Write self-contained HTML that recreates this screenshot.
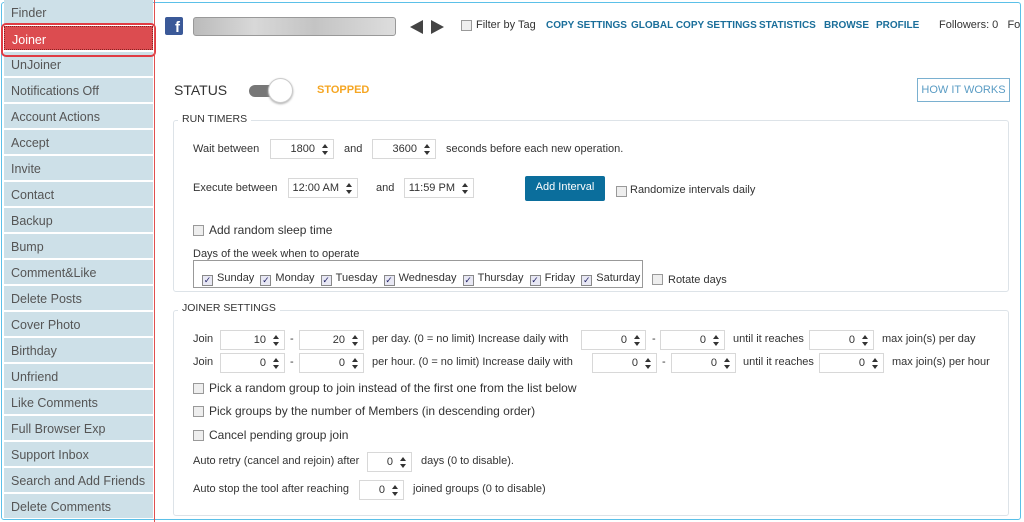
<!DOCTYPE html>
<html><head><style>
*{box-sizing:border-box;margin:0;padding:0}
body{width:1024px;height:522px;background:#fff;font-family:"Liberation Sans",sans-serif;font-size:11px;color:#333;position:relative;overflow:hidden}
.a{position:absolute;white-space:nowrap}
.frame{position:absolute;left:1px;top:2px;width:1020px;height:518px;border:1px solid #5bc0e8;border-radius:3px}
.side{position:absolute;left:4px;top:0;width:150px;height:520px}
.it{position:absolute;left:0;width:149px;height:24px;background:#cde0e8;color:#555;font-size:12.5px;padding:6px 0 0 7px}
.red{position:absolute;left:154px;top:0;width:1px;height:522px;background:#e05050}
.spin{position:absolute;height:20px;border:1px solid #d8d8d8;background:#fff;text-align:right;padding:3px 18px 0 0;font-size:11px;color:#333}
.spin:after{content:"";position:absolute;right:5px;top:4px;width:0;height:0;border-left:3px solid transparent;border-right:3px solid transparent;border-bottom:4px solid #333}
.spin:before{content:"";position:absolute;right:5px;top:11px;width:0;height:0;border-left:3px solid transparent;border-right:3px solid transparent;border-top:4px solid #333}
.cb{position:absolute;width:11px;height:11px;border:1px solid #999;background:#eee}
.cc{display:inline-block;width:11px;height:11px;border:1px solid #888;background:#e8e8f4;vertical-align:-2px;margin-right:4px;position:relative;color:#226;font-size:9px;line-height:9px;text-align:center}
.lk{color:#1a6e9a;font-weight:bold;font-size:10px}
.grp{position:absolute;border:1px solid #dde3e8;border-radius:3px}
.leg{position:absolute;background:#fff;padding:0 4px;font-size:10.5px;color:#333}
</style></head><body>
<div class="frame"></div>
<div class="side">
<div class="it" style="top:0">Finder</div>
<div class="it" style="top:26px;background:#dc4c50;color:#fff;border:1px dotted #822">Joiner</div>
<div class="it" style="top:52px">UnJoiner</div>
<div class="it" style="top:78px">Notifications Off</div>
<div class="it" style="top:104px">Account Actions</div>
<div class="it" style="top:130px">Accept</div>
<div class="it" style="top:156px">Invite</div>
<div class="it" style="top:182px">Contact</div>
<div class="it" style="top:208px">Backup</div>
<div class="it" style="top:234px">Bump</div>
<div class="it" style="top:260px">Comment&amp;Like</div>
<div class="it" style="top:286px">Delete Posts</div>
<div class="it" style="top:312px">Cover Photo</div>
<div class="it" style="top:338px">Birthday</div>
<div class="it" style="top:364px">Unfriend</div>
<div class="it" style="top:390px">Like Comments</div>
<div class="it" style="top:416px">Full Browser Exp</div>
<div class="it" style="top:442px">Support Inbox</div>
<div class="it" style="top:468px">Search and Add Friends</div>
<div class="it" style="top:494px">Delete Comments</div>
</div>
<div class="a" style="left:1px;top:23px;width:155px;height:34px;border:2px solid #e03c44;border-radius:5px"></div>
<div class="red"></div>

<div class="a" style="left:165px;top:17px;width:18px;height:18px;background:#3b5998;border-radius:2px;color:#fff;font-weight:bold;font-size:15px;text-align:right;padding:2px 3px 0 0;line-height:18px">f</div>
<div class="a" style="left:193px;top:17px;width:203px;height:19px;background:linear-gradient(90deg,#bbb,#d8d8d8 30%,#c4c4c4 60%,#ddd);border:1px solid #999;border-radius:3px"></div>
<div class="a" style="left:410px;top:20px;width:0;height:0;border-top:7px solid transparent;border-bottom:7px solid transparent;border-right:13px solid #444"></div>
<div class="a" style="left:431px;top:20px;width:0;height:0;border-top:7px solid transparent;border-bottom:7px solid transparent;border-left:13px solid #444"></div>
<div class="cb" style="left:461px;top:20px"></div>
<div class="a" style="left:476px;top:19px;font-size:11px">Filter by Tag</div>
<div class="a lk" style="left:546px;top:20px">COPY SETTINGS</div>
<div class="a lk" style="left:631px;top:20px">GLOBAL COPY SETTINGS</div>
<div class="a lk" style="left:759px;top:20px">STATISTICS</div>
<div class="a lk" style="left:824px;top:20px">BROWSE</div>
<div class="a lk" style="left:876px;top:20px">PROFILE</div>
<div class="a" style="left:939px;top:19px">Followers: 0 &nbsp;&nbsp;Fo</div>

<div class="a" style="left:174px;top:82px;font-size:14px;color:#333">STATUS</div>
<div class="a" style="left:249px;top:85px;width:40px;height:12px;background:#777;border-radius:6px"></div>
<div class="a" style="left:268px;top:78px;width:25px;height:25px;background:#fff;border:1px solid #ccc;border-radius:50%;box-shadow:0 1px 2px #aaa"></div>
<div class="a" style="left:317px;top:84px;color:#f5a623;font-weight:bold;font-size:11px">STOPPED</div>
<div class="a" style="left:917px;top:78px;width:93px;height:24px;border:1px solid #7ab0d0;color:#5a9cc4;font-size:11px;text-align:center;padding-top:5px">HOW IT WORKS</div>

<div class="grp" style="left:173px;top:120px;width:836px;height:172px"></div>
<div class="leg" style="left:178px;top:113px">RUN TIMERS</div>
<div class="a" style="left:193px;top:143px">Wait between</div>
<div class="spin" style="left:270px;top:139px;width:64px">1800</div>
<div class="a" style="left:344px;top:143px">and</div>
<div class="spin" style="left:372px;top:139px;width:64px">3600</div>
<div class="a" style="left:446px;top:143px">seconds before each new operation.</div>
<div class="a" style="left:193px;top:182px">Execute between</div>
<div class="spin" style="left:288px;top:178px;width:70px">12:00 AM</div>
<div class="a" style="left:376px;top:182px">and</div>
<div class="spin" style="left:404px;top:178px;width:70px">11:59 PM</div>
<div class="a" style="left:525px;top:176px;width:80px;height:25px;background:#0b6e9c;border-radius:2px;color:#fff;text-align:center;padding-top:5px">Add Interval</div>
<div class="cb" style="left:616px;top:186px"></div>
<div class="a" style="left:630px;top:184px">Randomize intervals daily</div>
<div class="cb" style="left:193px;top:225px"></div>
<div class="a" style="left:209px;top:223px;font-size:12px">Add random sleep time</div>
<div class="a" style="left:193px;top:248px">Days of the week when to operate</div>
<div class="a" style="left:193px;top:260px;width:450px;height:28px;border:1px solid #999;padding:11px 0 0 8px;font-size:11px">
<span class="cc">✓</span>Sunday &nbsp;<span class="cc">✓</span>Monday &nbsp;<span class="cc">✓</span>Tuesday &nbsp;<span class="cc">✓</span>Wednesday &nbsp;<span class="cc">✓</span>Thursday &nbsp;<span class="cc">✓</span>Friday &nbsp;<span class="cc">✓</span>Saturday</div>
<div class="cb" style="left:652px;top:274px"></div>
<div class="a" style="left:668px;top:274px">Rotate days</div>

<div class="grp" style="left:173px;top:310px;width:836px;height:206px"></div>
<div class="leg" style="left:178px;top:302px">JOINER SETTINGS</div>
<div class="a" style="left:193px;top:333px">Join</div>
<div class="spin" style="left:220px;top:330px;width:65px">10</div>
<div class="a" style="left:290px;top:333px">-</div>
<div class="spin" style="left:299px;top:330px;width:65px">20</div>
<div class="a" style="left:372px;top:333px">per day. (0 = no limit) Increase daily with</div>
<div class="spin" style="left:581px;top:330px;width:65px">0</div>
<div class="a" style="left:652px;top:333px">-</div>
<div class="spin" style="left:660px;top:330px;width:65px">0</div>
<div class="a" style="left:733px;top:333px">until it reaches</div>
<div class="spin" style="left:809px;top:330px;width:65px">0</div>
<div class="a" style="left:882px;top:333px">max join(s) per day</div>
<div class="a" style="left:193px;top:356px">Join</div>
<div class="spin" style="left:220px;top:353px;width:65px">0</div>
<div class="a" style="left:290px;top:356px">-</div>
<div class="spin" style="left:299px;top:353px;width:65px">0</div>
<div class="a" style="left:372px;top:356px">per hour. (0 = no limit) Increase daily with</div>
<div class="spin" style="left:592px;top:353px;width:65px">0</div>
<div class="a" style="left:662px;top:356px">-</div>
<div class="spin" style="left:671px;top:353px;width:65px">0</div>
<div class="a" style="left:743px;top:356px">until it reaches</div>
<div class="spin" style="left:819px;top:353px;width:65px">0</div>
<div class="a" style="left:892px;top:356px">max join(s) per hour</div>
<div class="cb" style="left:193px;top:383px"></div>
<div class="a" style="left:209px;top:381px;font-size:12px">Pick a random group to join instead of the first one from the list below</div>
<div class="cb" style="left:193px;top:406px"></div>
<div class="a" style="left:209px;top:404px;font-size:12px">Pick groups by the number of Members (in descending order)</div>
<div class="cb" style="left:193px;top:430px"></div>
<div class="a" style="left:209px;top:428px;font-size:12px">Cancel pending group join</div>
<div class="a" style="left:193px;top:455px">Auto retry (cancel and rejoin) after</div>
<div class="spin" style="left:367px;top:452px;width:45px">0</div>
<div class="a" style="left:421px;top:455px">days (0 to disable).</div>
<div class="a" style="left:193px;top:483px">Auto stop the tool after reaching</div>
<div class="spin" style="left:359px;top:480px;width:45px">0</div>
<div class="a" style="left:413px;top:483px">joined groups (0 to disable)</div>
</body></html>
